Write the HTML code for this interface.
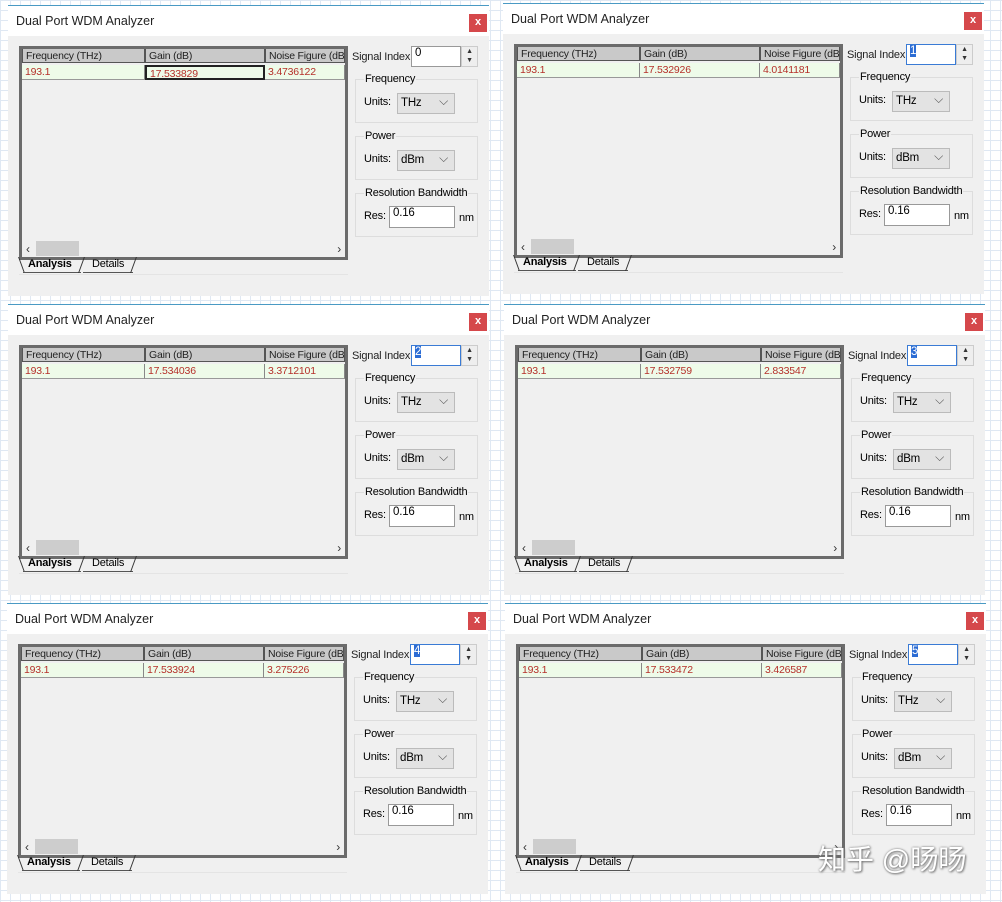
<!DOCTYPE html>
<html><head><meta charset="utf-8"><style>
body{margin:0;width:1002px;height:902px;position:relative;overflow:hidden;font-family:"Liberation Sans","Noto Sans CJK SC",sans-serif;
background-color:#fff;background-image:linear-gradient(#dfe8f3 1px,transparent 1px),linear-gradient(90deg,#dfe8f3 1px,transparent 1px);background-size:10px 10px}
.p{position:absolute;width:481px;height:290px;background:#f0f0f0;border-top:1px solid #4a9ac4;letter-spacing:-0.2px}
.t{position:absolute;left:0;top:0;width:481px;height:30px;background:#fff;font-size:12.5px;color:#222}
.t span{position:absolute;left:8px;top:8px;letter-spacing:0}
.x{position:absolute;left:461px;top:8px;width:18px;height:18px;background:#d5484b;color:#fff;font-size:11px;text-align:center;line-height:17px;font-weight:bold}
.f{position:absolute;left:11px;top:40px;width:323px;height:208px;border:3px solid #6b6b6b;background:#f0f0f0;font-size:10.5px}
.h{position:absolute;top:0;height:14px;background:#c9c9c9;border:1px solid #555;border-top:0;line-height:14px;padding-left:3px;color:#222;box-sizing:border-box;white-space:nowrap;overflow:hidden}
.d{position:absolute;top:16px;height:15px;background:#eefbe9;border-right:1px solid #888;border-bottom:1px solid #999;line-height:15px;padding-left:3px;color:#b5302a;box-sizing:border-box}
.sb{position:absolute;left:0;top:193px;width:323px;height:15px;background:#f0f0f0;font-size:12px;color:#333}
.th{position:absolute;left:14px;top:192px;width:43px;height:15px;background:#cdcdcd}
.tabs{position:absolute;left:11px;top:251px;height:17px;width:329px;font-size:11px;border-bottom:1px solid #e4e4e4}
.tb{position:absolute;top:0;height:15px;border-bottom:1px solid #555}
.sl{position:absolute;top:0;width:1px;height:16px;background:#333}
.r{position:absolute;font-size:11px;color:#222;white-space:nowrap}
.in{position:absolute;background:#fff;border:1px solid #999;font-size:11.5px;padding-left:3px;box-sizing:border-box}
.g{position:absolute;left:347px;width:123px;height:44px;border:1px solid #ddd;box-sizing:border-box}
.g b{position:absolute;left:8px;top:-7px;font-weight:normal;font-size:11px;background:#f0f0f0;padding:0 1px;white-space:nowrap}
.sel{position:absolute;left:41px;top:13px;width:58px;height:21px;background:#e3e3e3;border:1px solid #bbb;box-sizing:border-box;font-size:11.5px;line-height:19px;padding-left:3px}
.sel:after{content:"⌵";position:absolute;right:6px;top:-2px;color:#555;font-size:12px}
.u{position:absolute;left:8px;top:16px;font-size:11px}
.sp{position:absolute;left:453px;top:40px;width:17px;height:21px;background:#eee;border:1px solid #ccc;box-sizing:border-box;font-size:7px;text-align:center;line-height:9px;color:#333}
</style></head><body>

<div class="p" style="left:8px;top:5px">
<div class="t"><span>Dual Port WDM Analyzer</span><div class="x">x</div></div>
<div class="f">
<div class="h" style="left:0;width:123px">Frequency (THz)</div><div class="h" style="left:123px;width:120px">Gain (dB)</div><div class="h" style="left:243px;width:80px">Noise Figure (dB)</div>
<div class="d" style="left:0;width:123px">193.1</div><div class="d" style="left:123px;width:120px;border:2px solid #222">17.533829</div><div class="d" style="left:243px;width:80px">3.4736122</div>
<div class="sb"><span style="position:absolute;left:4px;top:0">‹</span><span style="position:absolute;right:4px;top:0">›</span></div><div class="th"></div>
</div>
<div class="tabs"><div class="sl" style="left:2px;transform:skewX(20deg)"></div><div class="tb" style="left:4px;width:58px"></div><div class="sl" style="left:62px;transform:skewX(-20deg)"></div><div class="tb" style="left:64px;width:50px"></div><div class="sl" style="left:114px;transform:skewX(-20deg)"></div><span style="position:absolute;left:9px;top:1px;font-weight:bold">Analysis</span><span style="position:absolute;left:73px;top:1px">Details</span></div>
<div class="r" style="left:344px;top:45px">Signal Index:</div><div class="in" style="left:403px;top:40px;width:50px;height:21px">0</div><div class="sp">▲<br>▼</div>
<div class="g" style="top:73px"><b>Frequency</b><span class="u">Units:</span><div class="sel">THz</div></div>
<div class="g" style="top:130px"><b>Power</b><span class="u">Units:</span><div class="sel">dBm</div></div>
<div class="g" style="top:187px"><b>Resolution Bandwidth</b><span class="u">Res:</span><div class="in" style="left:33px;top:12px;width:66px;height:22px">0.16</div><span style="position:absolute;left:103px;top:18px;font-size:11px">nm</span></div>
</div>

<div class="p" style="left:503px;top:3px">
<div class="t"><span>Dual Port WDM Analyzer</span><div class="x">x</div></div>
<div class="f">
<div class="h" style="left:0;width:123px">Frequency (THz)</div><div class="h" style="left:123px;width:120px">Gain (dB)</div><div class="h" style="left:243px;width:80px">Noise Figure (dB)</div>
<div class="d" style="left:0;width:123px">193.1</div><div class="d" style="left:123px;width:120px">17.532926</div><div class="d" style="left:243px;width:80px">4.0141181</div>
<div class="sb"><span style="position:absolute;left:4px;top:0">‹</span><span style="position:absolute;right:4px;top:0">›</span></div><div class="th"></div>
</div>
<div class="tabs"><div class="sl" style="left:2px;transform:skewX(20deg)"></div><div class="tb" style="left:4px;width:58px"></div><div class="sl" style="left:62px;transform:skewX(-20deg)"></div><div class="tb" style="left:64px;width:50px"></div><div class="sl" style="left:114px;transform:skewX(-20deg)"></div><span style="position:absolute;left:9px;top:1px;font-weight:bold">Analysis</span><span style="position:absolute;left:73px;top:1px">Details</span></div>
<div class="r" style="left:344px;top:45px">Signal Index:</div><div class="in" style="left:403px;top:40px;width:50px;height:21px;border-color:#3a7bd5"><span style="background:#2b6cd4;color:#fff">1</span></div><div class="sp">▲<br>▼</div>
<div class="g" style="top:73px"><b>Frequency</b><span class="u">Units:</span><div class="sel">THz</div></div>
<div class="g" style="top:130px"><b>Power</b><span class="u">Units:</span><div class="sel">dBm</div></div>
<div class="g" style="top:187px"><b>Resolution Bandwidth</b><span class="u">Res:</span><div class="in" style="left:33px;top:12px;width:66px;height:22px">0.16</div><span style="position:absolute;left:103px;top:18px;font-size:11px">nm</span></div>
</div>

<div class="p" style="left:8px;top:304px">
<div class="t"><span>Dual Port WDM Analyzer</span><div class="x">x</div></div>
<div class="f">
<div class="h" style="left:0;width:123px">Frequency (THz)</div><div class="h" style="left:123px;width:120px">Gain (dB)</div><div class="h" style="left:243px;width:80px">Noise Figure (dB)</div>
<div class="d" style="left:0;width:123px">193.1</div><div class="d" style="left:123px;width:120px">17.534036</div><div class="d" style="left:243px;width:80px">3.3712101</div>
<div class="sb"><span style="position:absolute;left:4px;top:0">‹</span><span style="position:absolute;right:4px;top:0">›</span></div><div class="th"></div>
</div>
<div class="tabs"><div class="sl" style="left:2px;transform:skewX(20deg)"></div><div class="tb" style="left:4px;width:58px"></div><div class="sl" style="left:62px;transform:skewX(-20deg)"></div><div class="tb" style="left:64px;width:50px"></div><div class="sl" style="left:114px;transform:skewX(-20deg)"></div><span style="position:absolute;left:9px;top:1px;font-weight:bold">Analysis</span><span style="position:absolute;left:73px;top:1px">Details</span></div>
<div class="r" style="left:344px;top:45px">Signal Index:</div><div class="in" style="left:403px;top:40px;width:50px;height:21px;border-color:#3a7bd5"><span style="background:#2b6cd4;color:#fff">2</span></div><div class="sp">▲<br>▼</div>
<div class="g" style="top:73px"><b>Frequency</b><span class="u">Units:</span><div class="sel">THz</div></div>
<div class="g" style="top:130px"><b>Power</b><span class="u">Units:</span><div class="sel">dBm</div></div>
<div class="g" style="top:187px"><b>Resolution Bandwidth</b><span class="u">Res:</span><div class="in" style="left:33px;top:12px;width:66px;height:22px">0.16</div><span style="position:absolute;left:103px;top:18px;font-size:11px">nm</span></div>
</div>

<div class="p" style="left:504px;top:304px">
<div class="t"><span>Dual Port WDM Analyzer</span><div class="x">x</div></div>
<div class="f">
<div class="h" style="left:0;width:123px">Frequency (THz)</div><div class="h" style="left:123px;width:120px">Gain (dB)</div><div class="h" style="left:243px;width:80px">Noise Figure (dB)</div>
<div class="d" style="left:0;width:123px">193.1</div><div class="d" style="left:123px;width:120px">17.532759</div><div class="d" style="left:243px;width:80px">2.833547</div>
<div class="sb"><span style="position:absolute;left:4px;top:0">‹</span><span style="position:absolute;right:4px;top:0">›</span></div><div class="th"></div>
</div>
<div class="tabs"><div class="sl" style="left:2px;transform:skewX(20deg)"></div><div class="tb" style="left:4px;width:58px"></div><div class="sl" style="left:62px;transform:skewX(-20deg)"></div><div class="tb" style="left:64px;width:50px"></div><div class="sl" style="left:114px;transform:skewX(-20deg)"></div><span style="position:absolute;left:9px;top:1px;font-weight:bold">Analysis</span><span style="position:absolute;left:73px;top:1px">Details</span></div>
<div class="r" style="left:344px;top:45px">Signal Index:</div><div class="in" style="left:403px;top:40px;width:50px;height:21px;border-color:#3a7bd5"><span style="background:#2b6cd4;color:#fff">3</span></div><div class="sp">▲<br>▼</div>
<div class="g" style="top:73px"><b>Frequency</b><span class="u">Units:</span><div class="sel">THz</div></div>
<div class="g" style="top:130px"><b>Power</b><span class="u">Units:</span><div class="sel">dBm</div></div>
<div class="g" style="top:187px"><b>Resolution Bandwidth</b><span class="u">Res:</span><div class="in" style="left:33px;top:12px;width:66px;height:22px">0.16</div><span style="position:absolute;left:103px;top:18px;font-size:11px">nm</span></div>
</div>

<div class="p" style="left:7px;top:603px">
<div class="t"><span>Dual Port WDM Analyzer</span><div class="x">x</div></div>
<div class="f">
<div class="h" style="left:0;width:123px">Frequency (THz)</div><div class="h" style="left:123px;width:120px">Gain (dB)</div><div class="h" style="left:243px;width:80px">Noise Figure (dB)</div>
<div class="d" style="left:0;width:123px">193.1</div><div class="d" style="left:123px;width:120px">17.533924</div><div class="d" style="left:243px;width:80px">3.275226</div>
<div class="sb"><span style="position:absolute;left:4px;top:0">‹</span><span style="position:absolute;right:4px;top:0">›</span></div><div class="th"></div>
</div>
<div class="tabs"><div class="sl" style="left:2px;transform:skewX(20deg)"></div><div class="tb" style="left:4px;width:58px"></div><div class="sl" style="left:62px;transform:skewX(-20deg)"></div><div class="tb" style="left:64px;width:50px"></div><div class="sl" style="left:114px;transform:skewX(-20deg)"></div><span style="position:absolute;left:9px;top:1px;font-weight:bold">Analysis</span><span style="position:absolute;left:73px;top:1px">Details</span></div>
<div class="r" style="left:344px;top:45px">Signal Index:</div><div class="in" style="left:403px;top:40px;width:50px;height:21px;border-color:#3a7bd5"><span style="background:#2b6cd4;color:#fff">4</span></div><div class="sp">▲<br>▼</div>
<div class="g" style="top:73px"><b>Frequency</b><span class="u">Units:</span><div class="sel">THz</div></div>
<div class="g" style="top:130px"><b>Power</b><span class="u">Units:</span><div class="sel">dBm</div></div>
<div class="g" style="top:187px"><b>Resolution Bandwidth</b><span class="u">Res:</span><div class="in" style="left:33px;top:12px;width:66px;height:22px">0.16</div><span style="position:absolute;left:103px;top:18px;font-size:11px">nm</span></div>
</div>

<div class="p" style="left:505px;top:603px">
<div class="t"><span>Dual Port WDM Analyzer</span><div class="x">x</div></div>
<div class="f">
<div class="h" style="left:0;width:123px">Frequency (THz)</div><div class="h" style="left:123px;width:120px">Gain (dB)</div><div class="h" style="left:243px;width:80px">Noise Figure (dB)</div>
<div class="d" style="left:0;width:123px">193.1</div><div class="d" style="left:123px;width:120px">17.533472</div><div class="d" style="left:243px;width:80px">3.426587</div>
<div class="sb"><span style="position:absolute;left:4px;top:0">‹</span><span style="position:absolute;right:4px;top:0">›</span></div><div class="th"></div>
</div>
<div class="tabs"><div class="sl" style="left:2px;transform:skewX(20deg)"></div><div class="tb" style="left:4px;width:58px"></div><div class="sl" style="left:62px;transform:skewX(-20deg)"></div><div class="tb" style="left:64px;width:50px"></div><div class="sl" style="left:114px;transform:skewX(-20deg)"></div><span style="position:absolute;left:9px;top:1px;font-weight:bold">Analysis</span><span style="position:absolute;left:73px;top:1px">Details</span></div>
<div class="r" style="left:344px;top:45px">Signal Index:</div><div class="in" style="left:403px;top:40px;width:50px;height:21px;border-color:#3a7bd5"><span style="background:#2b6cd4;color:#fff">5</span></div><div class="sp">▲<br>▼</div>
<div class="g" style="top:73px"><b>Frequency</b><span class="u">Units:</span><div class="sel">THz</div></div>
<div class="g" style="top:130px"><b>Power</b><span class="u">Units:</span><div class="sel">dBm</div></div>
<div class="g" style="top:187px"><b>Resolution Bandwidth</b><span class="u">Res:</span><div class="in" style="left:33px;top:12px;width:66px;height:22px">0.16</div><span style="position:absolute;left:103px;top:18px;font-size:11px">nm</span></div>
</div>

<div style="position:absolute;left:818px;top:838px;font-size:28px;color:#fff;text-shadow:0 0 2px #777,1px 1px 2px #777;font-family:'Liberation Sans','Noto Sans CJK SC',sans-serif;white-space:nowrap">知乎 @旸旸</div>
</body></html>
